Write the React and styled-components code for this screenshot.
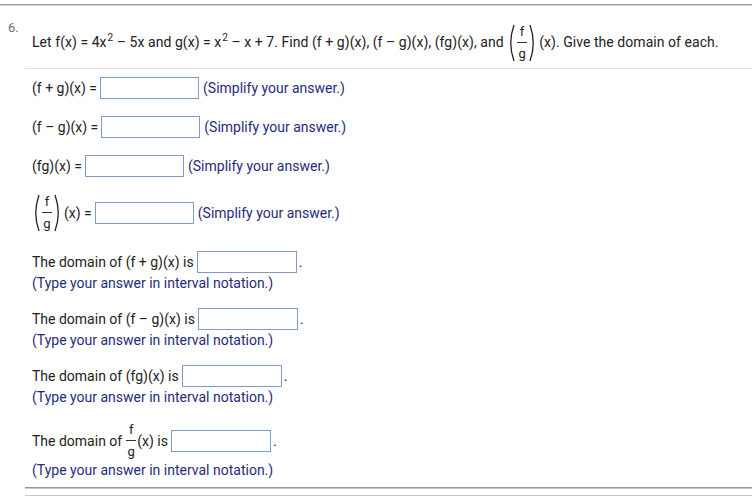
import React from 'react'
import styled, { createGlobalStyle } from 'styled-components'

const GlobalStyle = createGlobalStyle`
  html, body {
    margin: 0;
    padding: 0;
    background: #fff;
  }
  body {
    font-family: Roboto, "Liberation Sans", sans-serif;
    font-size: 14px;
    color: #222;
  }
`

const Page = styled.div`
  width: 752px;
  height: 497px;
  box-sizing: border-box;
  padding-top: 4px;
  overflow: hidden;
`
const TopRule = styled.div`
  height: 1px;
  background: #9a9a9a;
  border-bottom: 1px solid #d4d4d4;
`
const Body = styled.div`
  display: flex;
`
const Number = styled.div`
  width: 25px;
  flex: none;
  box-sizing: border-box;
  padding: 14px 0 0 8px;
  font-size: 13px;
  color: #6f6f6f;
`
const Content = styled.div`
  flex: 1;
  display: flex;
  flex-direction: column;
`
const Question = styled.div`
  height: 63px;
  flex: none;
  box-sizing: border-box;
  padding: 9px 0 0 7px;
  line-height: 54px;
  border-bottom: 1px solid #dcdfe4;
  white-space: nowrap;
  letter-spacing: 0.05px;
`
const Sup = styled.span`
  font-size: 10px;
  vertical-align: 6px;
  line-height: 0;
  margin-left: 1px;
`
const Section = styled.div`
  display: flex;
  flex-direction: column;
  gap: ${p => p.gap}px;
  padding: ${p => p.pad}px 0 0 7px;
`
const Group = styled.div`
  display: flex;
  flex-direction: column;
`
const Row = styled.div`
  display: flex;
  align-items: center;
  height: ${p => p.h || 22}px;
  white-space: nowrap;
`
const Box = styled.span`
  display: block;
  flex: none;
  width: ${p => p.w || 99}px;
  height: 22px;
  box-sizing: border-box;
  border: 1px solid #7f9bc6;
  background: #fff;
  margin: 0 4px 0 3px;
`
const Hint = styled.span`
  color: #1f2b7c;
`
const HintLine = styled.div`
  color: #1f2b7c;
  height: 20px;
  line-height: 20px;
`
const Dot = styled.span`
  margin-left: -2px;
`
const Frac = styled.span`
  display: inline-flex;
  flex-direction: column;
  align-items: center;
  vertical-align: middle;
  font-size: 13px;
  line-height: 14px;
  margin: 0 ${p => p.gap || 1}px 0 ${p => p.lead || 1}px;
`
const Bar = styled.span`
  display: block;
  width: 10px;
  height: 1px;
  background: #333;
  margin: 3px 0 4px;
`
const Paren = styled.svg`
  width: 8px;
  height: 38px;
  flex: none;
`
const ParenGroup = styled.span`
  display: inline-flex;
  align-items: center;
  vertical-align: middle;
  margin-right: 2px;
`
const BottomRule = styled.div`
  margin-top: 7px;
  height: 1px;
  background: #9a9a9a;
  border-bottom: 1px solid #c6c6c6;
`
const LastRule = styled.div`
  height: 1px;
  margin-top: 6px;
  background: #c8c8c8;
`

function FracFG({ gap, lead }) {
  return (
    <Frac gap={gap} lead={lead}>
      <span>f</span>
      <Bar />
      <span>g</span>
    </Frac>
  )
}

function ParenFrac() {
  return (
    <ParenGroup>
      <Paren viewBox="0 0 8 38">
        <path d="M7 1 Q0.5 19 7 37" fill="none" stroke="#222" strokeWidth="1.3" />
      </Paren>
      <FracFG gap={2} lead={2} />
      <Paren viewBox="0 0 8 38">
        <path d="M1 1 Q7.5 19 1 37" fill="none" stroke="#222" strokeWidth="1.3" />
      </Paren>
    </ParenGroup>
  )
}

const domains = ['(f + g)(x)', '(f – g)(x)', '(fg)(x)']

export default function App() {
  return (
    <>
      <GlobalStyle />
      <Page>
        <TopRule />
        <Body>
          <Number>6.</Number>
          <Content>
            <Question>
              Let f(x) = 4x<Sup>2</Sup> – 5x and g(x) = x<Sup>2</Sup> – x + 7. Find (f + g)(x), (f – g)(x), (fg)(x), and{' '}
              <ParenFrac />
              (x). Give the domain of each.
            </Question>
            <Section gap={17} pad={8}>
              <Row>
                (f + g)(x) =<Box /><Hint>(Simplify your answer.)</Hint>
              </Row>
              <Row>
                (f – g)(x) =<Box /><Hint>(Simplify your answer.)</Hint>
              </Row>
              <Row>
                (fg)(x) =<Box /><Hint>(Simplify your answer.)</Hint>
              </Row>
              <Row h={38}>
                <ParenFrac />
                (x) =<Box /><Hint>(Simplify your answer.)</Hint>
              </Row>
            </Section>
            <Section gap={15} pad={19}>
              {domains.map(d => (
                <Group key={d}>
                  <Row>
                    The domain of {d} is<Box w={100} /><Dot>.</Dot>
                  </Row>
                  <HintLine>(Type your answer in interval notation.)</HintLine>
                </Group>
              ))}
              <Group>
                <Row h={38}>
                  The domain of<FracFG lead={4} />(x) is<Box w={100} /><Dot>.</Dot>
                </Row>
                <HintLine>(Type your answer in interval notation.)</HintLine>
              </Group>
            </Section>
            <BottomRule />
            <LastRule />
          </Content>
        </Body>
      </Page>
    </>
  )
}
